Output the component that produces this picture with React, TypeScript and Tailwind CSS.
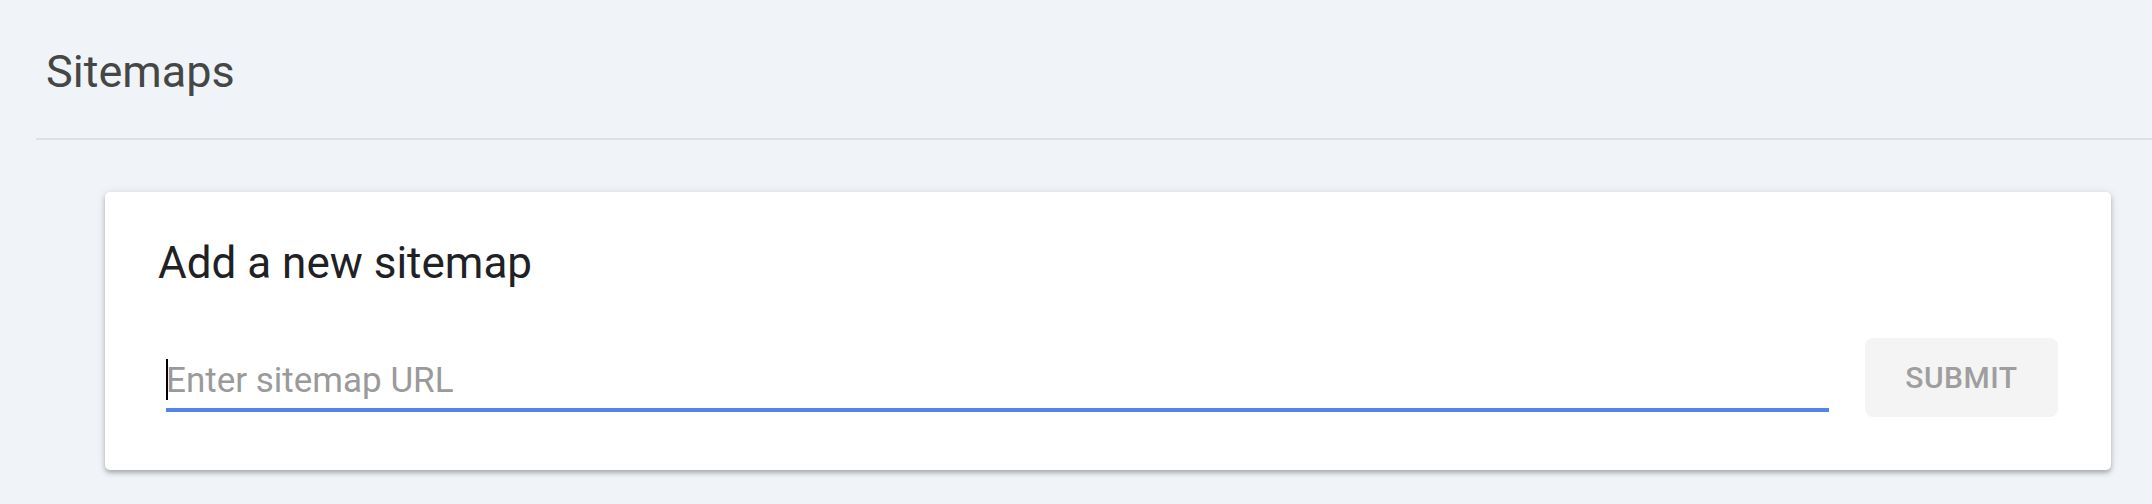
export default function App() {
  return (
    <div className="min-h-[504px] w-full bg-[#f0f4f9] font-['Roboto',sans-serif]">
      <div className="pl-[46px] pt-[50px] pb-[44px]">
        <h1 className="text-[45px] leading-[44px] font-normal text-[#444746]">
          Sitemaps
        </h1>
      </div>
      <div className="ml-[36px] h-[2px] bg-[#dde1e3]" />

      <div className="ml-[105px] mr-[41px] mt-[52px] rounded-[5px] bg-white px-[53px] pt-[49px] pb-[53px] shadow-[0_3px_4px_rgba(60,64,67,0.32),0_1px_8px_rgba(60,64,67,0.14)]">
        <h2 className="text-[44px] leading-[44px] font-normal text-[#202124]">
          Add a new sitemap
        </h2>

        <div className="mt-[53px] flex items-start gap-[36px]">
          <div className="relative ml-[8px] mt-[14px] flex-1">
            <input
              type="text"
              placeholder="Enter sitemap URL"
              className="block h-[60px] w-full border-b-[4px] border-[#5383ec] bg-transparent p-0 text-[35px] leading-[56px] text-[#202124] outline-none placeholder:text-[#9a9a9a]"
            />
            <span className="absolute left-0 top-[7px] h-[41px] w-[2px] bg-black" />
          </div>
          <button
            type="button"
            disabled
            className="h-[79px] w-[193px] rounded-[8px] bg-[#f4f4f4] text-[30px] font-medium tracking-[0.5px] text-[#9e9e9e]"
          >
            SUBMIT
          </button>
        </div>
      </div>
    </div>
  );
}
